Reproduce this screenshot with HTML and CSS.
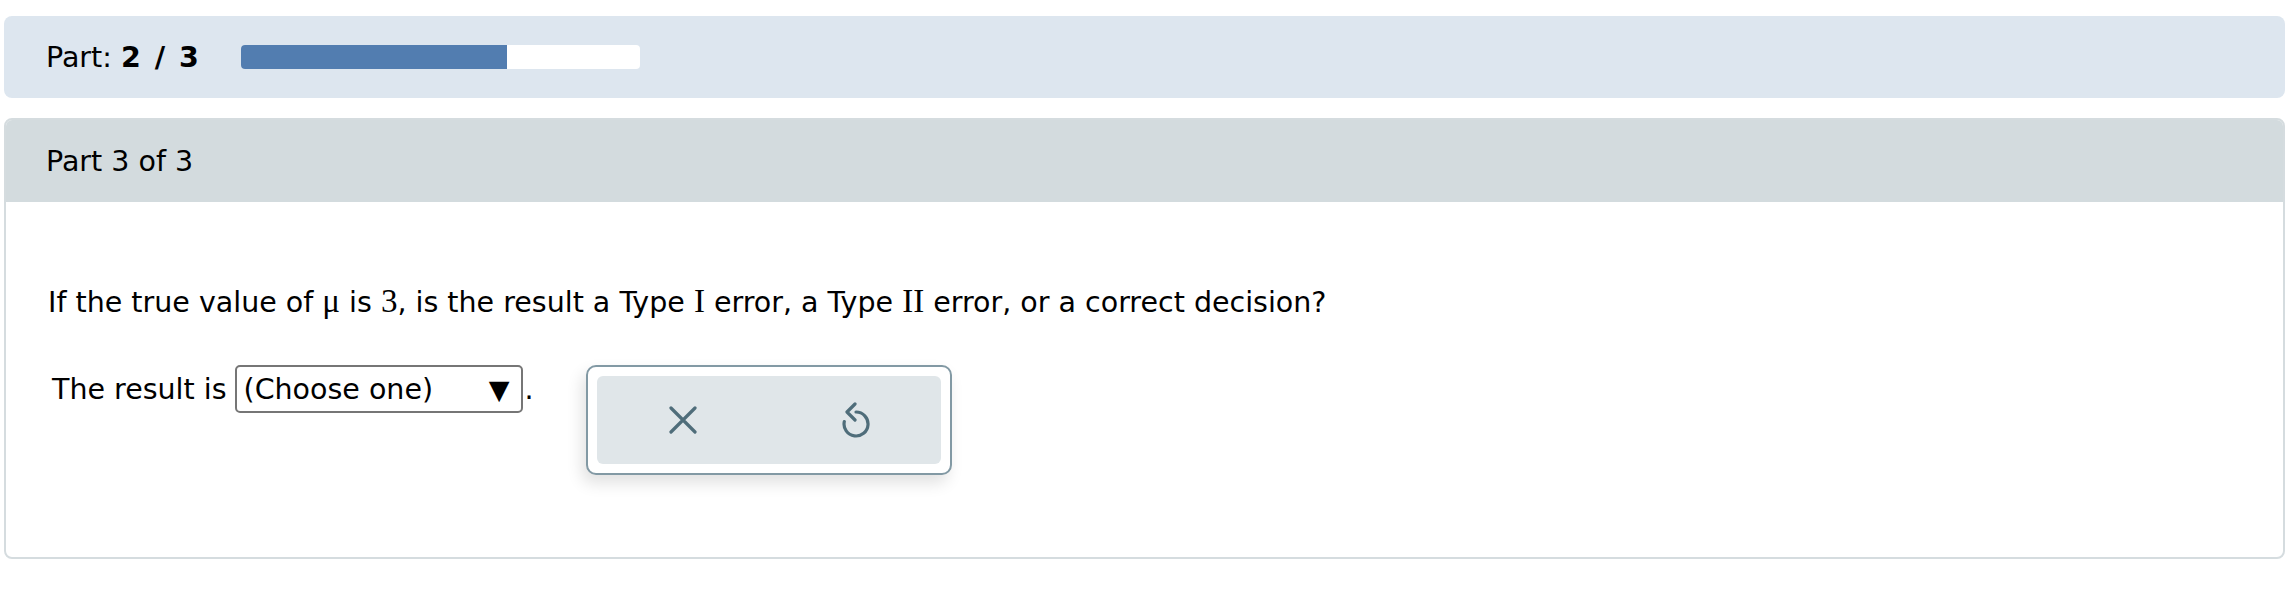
FILE: index.html
```html
<!DOCTYPE html>
<html>
<head>
<meta charset="utf-8">
<link rel="stylesheet" href="styles.css">
</head>
<body>
  <div class="progress-bar-wrap">
    <span class="part-label">Part: <b>2 / 3</b></span>
    <div class="track"><div class="fill" style="width: 66.67%"></div></div>
  </div>
  <div class="panel">
    <div class="panel-header">Part 3 of 3</div>
    <div class="panel-body">
      <p class="question">If the true value of <span class="math">μ</span> is <span class="math">3</span>, is the result a Type <span class="math">I</span> error, a Type <span class="math">II</span> error, or a correct decision?</p>
      <div class="answer-row">
        <div class="answer-line">
          <span>The result is</span>
          <span class="dropdown"><span>(Choose one)</span><span class="caret">▼</span></span><span>.</span>
        </div>
        <div class="actions">
          <div class="actions-inner">
            <button class="action-btn" aria-label="Clear">
              <svg width="28" height="28" viewBox="0 0 28 28"><path d="M2 2 L26 26 M26 2 L2 26" fill="none" stroke="#4f6d7a" stroke-width="3.2" stroke-linecap="round"/></svg>
            </button>
            <button class="action-btn" aria-label="Undo">
              <svg width="36" height="36" viewBox="0 0 36 36"><path d="M19 10 A12 12 0 1 1 7.3 19.5" fill="none" stroke="#4f6d7a" stroke-width="3.2" stroke-linecap="round"/><path d="M18 2 L10 10 L18 18" fill="none" stroke="#4f6d7a" stroke-width="3.2" stroke-linecap="round" stroke-linejoin="round"/></svg>
            </button>
          </div>
        </div>
      </div>
    </div>
  </div>
</body>
</html>
```

FILE: styles.css
```css
html, body {
  background: #ffffff;
}
body {
  margin: 0;
  padding: 16px 3px 0 4px;
  font-family: "DejaVu Sans", Verdana, sans-serif;
  font-size: 28.5px;
  color: #000;
}
.progress-bar-wrap {
  height: 82px;
  background: #dde6ef;
  border-radius: 8px;
  display: flex;
  align-items: center;
  padding-left: 42px;
  gap: 40px;
}
.part-label b {
  font-weight: bold;
  letter-spacing: 2px;
}
.track {
  width: 399px;
  height: 24px;
  background: #ffffff;
  border-radius: 4px;
  overflow: hidden;
}
.fill {
  height: 100%;
  background: #527db0;
}
.panel {
  margin-top: 20px;
  border: 2px solid #d5dcdf;
  border-radius: 8px;
  overflow: hidden;
}
.panel-header {
  background: #d3dbde;
  height: 82px;
  display: flex;
  align-items: center;
  padding-left: 42px;
  margin: -2px -2px 0 -2px;
  padding-top: 2px;
}
.panel-body {
  padding: 79px 42px 82px 42px;
}
.question {
  margin: 0;
  line-height: 40px;
}
.math {
  font-family: "Liberation Serif", "Times New Roman", serif;
  font-size: 33px;
}
.answer-row {
  margin-top: 42px;
  display: flex;
  align-items: flex-start;
  gap: 52px;
  padding-left: 4px;
}
.answer-line {
  display: flex;
  align-items: center;
  height: 48px;
  gap: 8px;
}
.dropdown {
  box-sizing: border-box;
  width: 288px;
  height: 48px;
  border: 2px solid #767676;
  border-radius: 5px;
  display: flex;
  align-items: center;
  justify-content: space-between;
  padding: 0 11px 0 7px;
  margin-right: -6px;
}
.caret {
  font-size: 27px;
}
.actions {
  box-sizing: border-box;
  width: 366px;
  height: 110px;
  border: 2px solid #8299a4;
  border-radius: 10px;
  padding: 9px;
  background: #fff;
  box-shadow: -4px 8px 16px rgba(0, 0, 0, 0.12);
}
.actions-inner {
  height: 100%;
  background: #e0e6e9;
  border-radius: 6px;
  display: flex;
}
.action-btn {
  flex: 1;
  border: none;
  background: transparent;
  display: flex;
  align-items: center;
  justify-content: center;
  padding: 0;
}
```
